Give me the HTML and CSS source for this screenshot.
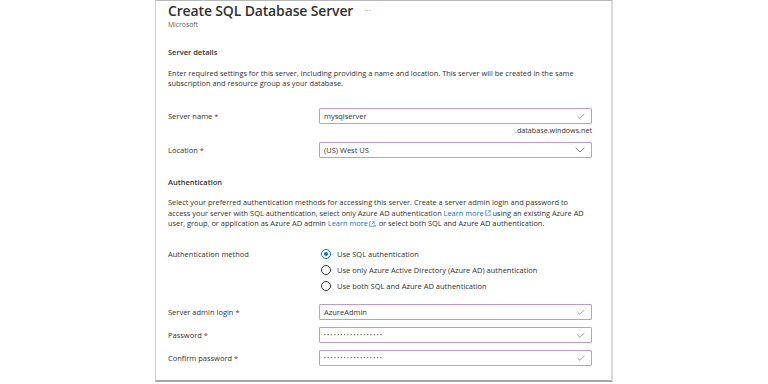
FILE: index.html
```html
<!DOCTYPE html>
<html>
<head>
<meta charset="utf-8">
<link rel="stylesheet" href="styles.css">
</head>
<body>
<div class="panel">
  <div class="title-row">
    <h1 class="title">Create SQL Database Server</h1>
    <span class="more">···</span>
  </div>
  <div class="publisher">Microsoft</div>

  <h2 class="section-title st-server">Server details</h2>
  <p class="desc desc-server">Enter required settings for this server, including providing a name and location. This server will be created in the same subscription and resource group as your database.</p>

  <div class="row row-name">
    <div class="label">Server name <span class="req">*</span></div>
    <div class="field">
      <div class="input"><span class="val">mysqlserver</span><svg class="check" viewBox="0 0 8 6" width="8" height="6"><path d="M0.6 3.2 L2.9 5.3 L7.4 0.8" fill="none" stroke="#8a8886" stroke-width="0.8"/></svg></div>
      <div class="suffix">.database.windows.net</div>
    </div>
  </div>

  <div class="row row-loc">
    <div class="label">Location <span class="req">*</span></div>
    <div class="field">
      <div class="input"><span class="val">(US) West US</span><svg class="chev" viewBox="0 0 10 6" width="10" height="6"><path d="M0.7 0.8 L5 5 L9.3 0.8" fill="none" stroke="#605e5c" stroke-width="0.8"/></svg></div>
    </div>
  </div>

  <h2 class="section-title st-auth">Authentication</h2>
  <p class="desc desc-auth"><span>Select your preferred authentication methods for accessing this server. Create a server admin login and password to</span> <span>access your server with SQL authentication, select only Azure AD authentication</span> <a class="link">Learn more<svg class="ext" viewBox="0 0 6 6" width="6" height="6"><path d="M2.4 0.7 H0.7 V5.3 H5.3 V3.6 M3.3 0.7 H5.3 V2.7 M5.3 0.7 L2.6 3.4" fill="none" stroke="#0078d4" stroke-width="0.6"/></svg></a> <span>using an existing Azure AD</span> <span>user, group, or application as Azure AD admin</span> <a class="link">Learn more<svg class="ext" viewBox="0 0 6 6" width="6" height="6"><path d="M2.4 0.7 H0.7 V5.3 H5.3 V3.6 M3.3 0.7 H5.3 V2.7 M5.3 0.7 L2.6 3.4" fill="none" stroke="#0078d4" stroke-width="0.6"/></svg></a><span>, or select both SQL and Azure AD authentication.</span></p>

  <div class="row row-method">
    <div class="label label-method">Authentication method</div>
    <div class="field radios">
      <div class="radio-item"><span class="radio checked"></span><span>Use SQL authentication</span></div>
      <div class="radio-item"><span class="radio"></span><span>Use only Azure Active Directory (Azure AD) authentication</span></div>
      <div class="radio-item"><span class="radio"></span><span>Use both SQL and Azure AD authentication</span></div>
    </div>
  </div>

  <div class="row row-admin">
    <div class="label">Server admin login <span class="req">*</span></div>
    <div class="field">
      <div class="input"><span class="val">AzureAdmin</span><svg class="check" viewBox="0 0 8 6" width="8" height="6"><path d="M0.6 3.2 L2.9 5.3 L7.4 0.8" fill="none" stroke="#8a8886" stroke-width="0.8"/></svg></div>
    </div>
  </div>

  <div class="row row-pw">
    <div class="label">Password <span class="req">*</span></div>
    <div class="field">
      <div class="input"><span class="val dots">••••••••••••••••••</span><svg class="check" viewBox="0 0 8 6" width="8" height="6"><path d="M0.6 3.2 L2.9 5.3 L7.4 0.8" fill="none" stroke="#8a8886" stroke-width="0.8"/></svg></div>
    </div>
  </div>

  <div class="row row-pw">
    <div class="label">Confirm password <span class="req">*</span></div>
    <div class="field">
      <div class="input"><span class="val dots">••••••••••••••••••</span><svg class="check" viewBox="0 0 8 6" width="8" height="6"><path d="M0.6 3.2 L2.9 5.3 L7.4 0.8" fill="none" stroke="#8a8886" stroke-width="0.8"/></svg></div>
    </div>
  </div>
</div>
</body>
</html>
```

FILE: styles.css
```css
* { box-sizing: border-box; }
html, body { margin: 0; padding: 0; background: #ffffff; }
body {
  font-family: "Open Sans", "Noto Sans", "Liberation Sans", sans-serif;
  color: #323130;
  font-size: 7.5px;
}
.panel {
  margin-left: 155px;
  width: 458px;
  height: 382px;
  border-top: 1px solid #b8b8b8;
  border-left: 1px solid #cfcfcf;
  border-right: 2px solid #d9d9d9;
  border-bottom: 2px solid #a8a8a8;
  padding: 0 19px 0 12px;
  display: flex;
  flex-direction: column;
}
.title-row {
  display: flex;
  align-items: center;
  height: 19px;
}
.title {
  margin: 0;
  font-size: 14px;
  font-weight: 600;
  line-height: 19px;
  letter-spacing: -0.15px;
  color: #323130;
}
.more {
  margin-left: 11px;
  color: #a19f9d;
  font-size: 9px;
  line-height: 19px;
}
.publisher {
  font-size: 6.8px;
  line-height: 9px;
  color: #605e5c;
}
.section-title {
  margin: 0;
  font-size: 7.5px;
  font-weight: 600;
  line-height: 10px;
  color: #323130;
}
.st-server { margin-top: 18px; }
.st-auth { margin-top: 19px; }
.desc {
  margin: 10.5px 0 0;
  font-size: 7.4px;
  line-height: 10.5px;
  color: #323130;
}
.link { color: #0078d4; }
.ext { margin-left: 1px; vertical-align: -0.5px; }
.row {
  display: flex;
  align-items: flex-start;
}
.label {
  width: 151px;
  flex: none;
  font-size: 7.5px;
  line-height: 16px;
  color: #323130;
}
.req { color: #a4262c; }
.field { flex: 1; }
.row-name { margin-top: 19px; }
.row-loc { margin-top: 7px; }
.row-method { margin-top: 17px; }
.row-admin { margin-top: 10px; }
.row-pw { margin-top: 7px; }
.input {
  height: 16px;
  border: 1px solid #c09ad2;
  border-radius: 1px;
  display: flex;
  align-items: center;
  justify-content: space-between;
  padding: 0 6px 0 4px;
  font-size: 7.5px;
}
.val { color: #323130; }
.dots { font-size: 4.5px; letter-spacing: 1.6px; color: #323130; }
.suffix {
  text-align: right;
  font-size: 7.2px;
  line-height: 10px;
  margin-top: 1px;
  color: #323130;
}
.radios { display: flex; flex-direction: column; }
.radio-item {
  display: flex;
  align-items: center;
  height: 16px;
  font-size: 7.5px;
}
.radio {
  width: 10px;
  height: 10px;
  border: 1px solid #323130;
  border-radius: 50%;
  margin: 0 6px 0 2px;
  flex: none;
  position: relative;
}
.radio.checked { border-color: #0078d4; }
.radio.checked::after {
  content: "";
  position: absolute;
  left: 2px;
  top: 2px;
  width: 4px;
  height: 4px;
  border-radius: 50%;
  background: #0078d4;
}
```
